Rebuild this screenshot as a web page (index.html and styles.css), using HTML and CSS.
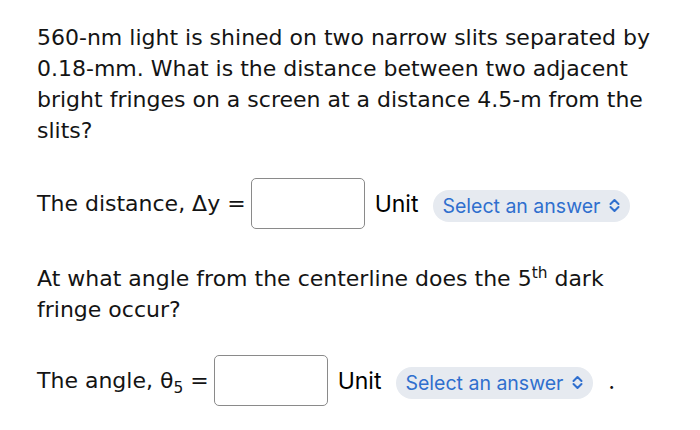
FILE: index.html
```html
<!DOCTYPE html>
<html>
<head>
<meta charset="utf-8">
<link rel="stylesheet" href="styles.css">
</head>
<body>
<div class="page">
  <p class="q">560-nm light is shined on two narrow slits separated by 0.18-mm. What is the distance between two adjacent bright fringes on a screen at a distance 4.5-m from the slits?</p>
  <div class="row row1">
    <span class="label">The distance, Δy =</span>
    <span class="box"></span>
    <span class="unit">Unit</span>
    <span class="pill">Select an answer
      <svg class="chev" width="13" height="15" viewBox="0 0 13 15"><path d="M2.5 6 L6.5 2 L10.5 6 M2.5 9 L6.5 13 L10.5 9" fill="none" stroke="#2f6fce" stroke-width="2" stroke-linecap="round" stroke-linejoin="round"/></svg>
    </span>
  </div>
  <p class="q q2">At what angle from the centerline does the 5<sup>th</sup> dark fringe occur?</p>
  <div class="row row2">
    <span class="label">The angle, θ<sub>5</sub> =</span>
    <span class="box"></span>
    <span class="unit">Unit</span>
    <span class="pill">Select an answer
      <svg class="chev" width="13" height="15" viewBox="0 0 13 15"><path d="M2.5 6 L6.5 2 L10.5 6 M2.5 9 L6.5 13 L10.5 9" fill="none" stroke="#2f6fce" stroke-width="2" stroke-linecap="round" stroke-linejoin="round"/></svg>
    </span>
    <span class="dot">.</span>
  </div>
</div>
</body>
</html>
```
FILE: styles.css
```css
html, body { margin: 0; padding: 0; background: #fff; }
.page {
  padding: 22px 0 0 37px;
  font-family: "DejaVu Sans", sans-serif;
  color: #141414;
  font-size: 22px;
}
.q { margin: 0; line-height: 31px; width: 630px; }
.row { display: flex; align-items: center; }
.row1 { margin-top: 32px; }
.q2 { margin-top: 34px; }
.row2 { margin-top: 30px; }
.label { white-space: nowrap; }
.box {
  width: 114px; height: 51px;
  border: 1px solid #8a8a8a; border-radius: 5px;
  margin-left: 5px; box-sizing: border-box;
}
.unit {
  font-family: "Inter", "Roboto", sans-serif;
  font-size: 23px; margin-left: 10px; color: #000;
}
.pill {
  font-family: "Inter", "Roboto", sans-serif;
  display: inline-flex; align-items: center; gap: 8px;
  background: #e6eaf0; color: #2f6fce;
  font-size: 19.5px; border-radius: 16px;
  height: 32px; padding: 0 9px 0 9px; margin-left: 15px;
  position: relative; top: 2px;
}
sup { font-size: 0.7em; line-height: 0; vertical-align: 0.55em; }
sub { font-size: 0.7em; line-height: 0; }
.dot { font-family: "Inter", sans-serif; margin-left: 15px; font-size: 22px; }
```
